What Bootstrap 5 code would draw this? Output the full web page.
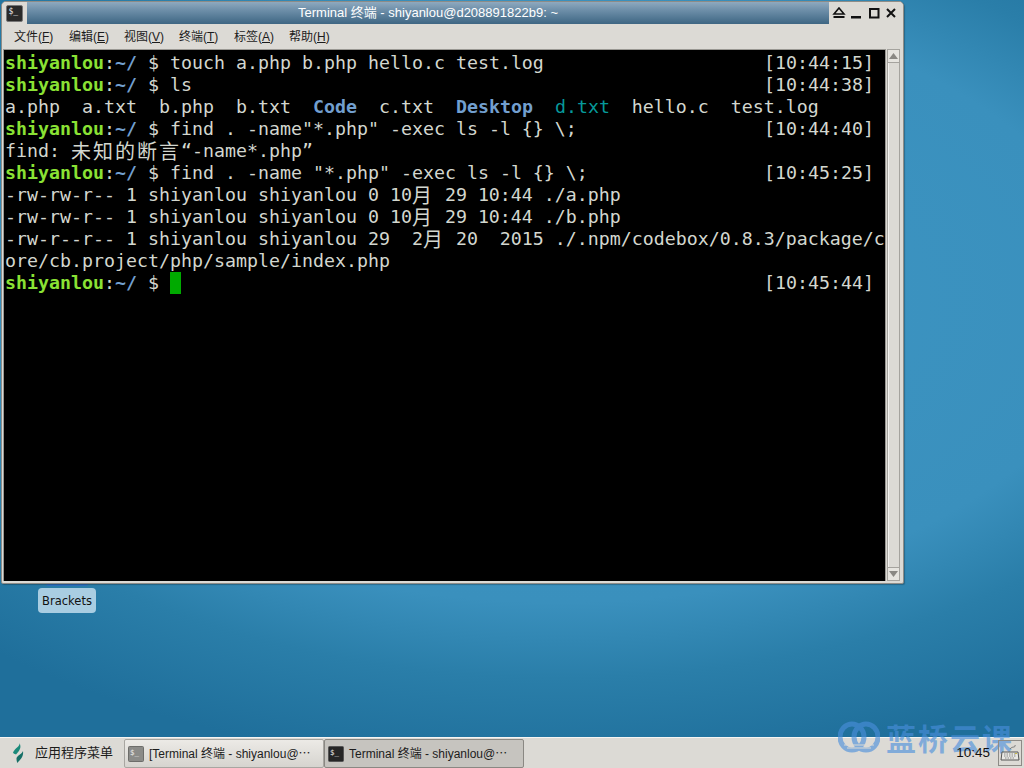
<!DOCTYPE html>
<html lang="zh"><head><meta charset="utf-8"><title>Terminal</title>
<link href="https://cdn.jsdelivr.net/npm/bootstrap@5.3.0/dist/css/bootstrap.min.css" rel="stylesheet">
<style>
html,body{height:100%;overflow:hidden}
body{font-family:"Liberation Sans","Noto Sans CJK SC",sans-serif;font-size:12px;color:#1c1c1c}
.screen{width:1024px;height:768px}
.desk{background:radial-gradient(ellipse 760px 420px at 560px 300px,#3d96c4 0%,#3a90bd 72%,#2a7ea9 90%,#1f6f9b 112%);}
.term-win{position:absolute;left:1px;top:1px;width:903px;height:583px;background:#dcdad5;border:1px solid #8e8c87;border-radius:5px 5px 2px 2px;box-shadow:1px 1px 1px rgba(0,0,0,.25);overflow:hidden}
.win-head{height:22px;background:#dcdad5;flex:none}
.win-ico{width:25px}
.win-title{background:linear-gradient(#8ea9bf,#6f90aa 35%,#3e6683);color:#fff;font-size:13px}
.win-btns{width:74px;padding-right:5px;gap:3.500px}
.win-menu{height:25px;padding-left:12px;font-size:12px;padding-top:1px;flex:none}
.mnu{width:55px}
.win-menu u{text-underline-offset:1px}
.term-row{padding:0 3px 2px 1px;flex:1 1 0;min-height:0}
.term-pane{width:883px;background:#000;border:1px solid #9a9893;border-width:1px 1px 0 1px;padding:2px 0 0 1px}
.term-lines{font-family:"DejaVu Sans Mono","Liberation Mono",monospace;font-size:18.27px;color:#d3d7cf}
.tline{height:22px;line-height:22px;padding-right:11px;white-space:pre}
.pg{color:#8ae234;font-weight:700}
.pb{color:#729fcf;font-weight:700}
.dirb{color:#729fcf;font-weight:700}
.tl{color:#06989a}
.cj{font-family:"Noto Sans CJK SC",sans-serif;font-size:20px;letter-spacing:2px;display:inline-block;vertical-align:top;height:22px;line-height:22px}
.cur{display:inline-block;width:11px;height:22px;background:#00aa00;vertical-align:top}
.sbar{width:13px;background:#cfcdc8;border:1px solid #a5a39e;margin-left:1px}
.sb-btn{height:13px;background:#e6e4df;border-bottom:1px solid #a5a39e}
.sb-btn.low{border-bottom:0;border-top:1px solid #a5a39e}
.sb-thumb{background:#dcdad5;border-left:1px solid #f4f3f0}
.brk{position:absolute;left:38px;top:588px;width:58px;height:25px;background:#a9cde2;border-radius:4px;color:#111;line-height:26px;text-align:center;font-family:"DejaVu Sans",sans-serif;font-size:11.5px}
.brk-under{position:absolute;left:46px;top:584px;width:42px;height:2px;background:#2b6fbe;border-radius:0 0 4px 4px}
.bar{height:31px;background:#dcdad5;border-top:1px solid #f5f5f3;position:relative}
.start{width:124px;padding-left:12px;gap:11px;font-size:13px}
.tbtn{width:200px;height:29px;margin-top:1px;border:1px solid #a8a6a1;border-radius:2px;padding:0 3px;gap:5px;font-size:12px;white-space:nowrap;background:linear-gradient(#eceae6,#d6d4cf)}
.tbtn.on{background:#c6c4bf;border-color:#8a8883}
.clk{font-size:13.500px;width:44px;position:relative;z-index:2;color:#111}
.kb{width:24px;height:26px;border:1px solid #8d8b86;margin:0 2px 0 8px;position:relative;z-index:2}
.wm{position:absolute;left:838px;top:720px;gap:6px;color:#4a8fdc;opacity:.62;pointer-events:none;z-index:1}
.wm-t{font-family:"Noto Sans CJK SC",sans-serif;font-weight:700;font-size:30px;line-height:34px;letter-spacing:2px;width:132px;white-space:nowrap}
</style></head>
<body>
<div class="screen d-flex flex-column position-relative overflow-hidden">
  <div class="desk flex-grow-1 position-relative">
    <div class="brk-under"></div>
    <div class="brk">Brackets</div>
    <div class="term-win d-flex flex-column">
      <div class="win-head d-flex">
        <div class="win-ico d-flex align-items-center justify-content-center">
          <svg width="17" height="17" viewBox="0 0 17 17"><rect x=".5" y=".5" width="16" height="16" rx="1.5" fill="#2a2a2a" stroke="#777"/><text x="2.500" y="9" font-size="8" fill="#eee" font-family="DejaVu Sans Mono">$_</text></svg>
        </div>
        <div class="win-title flex-grow-1 d-flex align-items-center justify-content-center">Terminal 终端 - shiyanlou@d208891822b9: ~</div>
        <div class="win-btns d-flex align-items-center justify-content-end">
          <svg width="14" height="14" viewBox="0 0 14 14"><path d="M7 2l5 6H2z" fill="none" stroke="#111" stroke-width="1.6"/><rect x="1.500" y="10" width="11" height="2" fill="#111"/></svg>
          <svg width="14" height="14" viewBox="0 0 14 14"><rect x="2" y="10" width="10" height="2.500" fill="#111"/></svg>
          <svg width="14" height="14" viewBox="0 0 14 14"><rect x="3" y="3" width="8.500" height="8.500" fill="none" stroke="#111" stroke-width="2"/></svg>
          <svg width="14" height="14" viewBox="0 0 14 14"><path d="M3 3l8 8M11 3l-8 8" stroke="#111" stroke-width="2"/></svg>
        </div>
      </div>
      <div class="win-menu d-flex align-items-center">
        <span class="mnu">文件(<u>F</u>)</span><span class="mnu">编辑(<u>E</u>)</span><span class="mnu">视图(<u>V</u>)</span><span class="mnu">终端(<u>T</u>)</span><span class="mnu">标签(<u>A</u>)</span><span class="mnu">帮助(<u>H</u>)</span>
      </div>
      <div class="term-row d-flex">
        <div class="term-pane term-lines">
          <div class="tline d-flex justify-content-between"><span><span class="pg">shiyanlou</span>:<span class="pb">~/</span> $ touch a.php b.php hello.c test.log</span><span>[10:44:15]</span></div>
          <div class="tline d-flex justify-content-between"><span><span class="pg">shiyanlou</span>:<span class="pb">~/</span> $ ls</span><span>[10:44:38]</span></div>
          <div class="tline"><span>a.php  a.txt  b.php  b.txt  <span class="dirb">Code</span>  c.txt  <span class="dirb">Desktop</span>  <span class="tl">d.txt</span>  hello.c  test.log</span></div>
          <div class="tline d-flex justify-content-between"><span><span class="pg">shiyanlou</span>:<span class="pb">~/</span> $ find . -name"*.php" -exec ls -l {} \;</span><span>[10:44:40]</span></div>
          <div class="tline"><span>find: <span class="cj">未知的断言</span>“-name*.php”</span></div>
          <div class="tline d-flex justify-content-between"><span><span class="pg">shiyanlou</span>:<span class="pb">~/</span> $ find . -name "*.php" -exec ls -l {} \;</span><span>[10:45:25]</span></div>
          <div class="tline"><span>-rw-rw-r-- 1 shiyanlou shiyanlou 0 10<span class="cj">月</span> 29 10:44 ./a.php</span></div>
          <div class="tline"><span>-rw-rw-r-- 1 shiyanlou shiyanlou 0 10<span class="cj">月</span> 29 10:44 ./b.php</span></div>
          <div class="tline"><span>-rw-r--r-- 1 shiyanlou shiyanlou 29  2<span class="cj">月</span> 20  2015 ./.npm/codebox/0.8.3/package/c</span></div>
          <div class="tline"><span>ore/cb.project/php/sample/index.php</span></div>
          <div class="tline d-flex justify-content-between"><span><span class="pg">shiyanlou</span>:<span class="pb">~/</span> $ <span class="cur"></span></span><span>[10:45:44]</span></div>
        </div>
        <div class="sbar d-flex flex-column">
          <div class="sb-btn d-flex align-items-center justify-content-center"><svg width="9" height="6" viewBox="0 0 9 6"><path d="M4.500 0l4.500 6H0z" fill="#8a8883"/></svg></div>
          <div class="sb-thumb flex-grow-1"></div>
          <div class="sb-btn low d-flex align-items-center justify-content-center"><svg width="9" height="6" viewBox="0 0 9 6"><path d="M0 0h9L4.500 6z" fill="#8a8883"/></svg></div>
        </div>
      </div>
    </div>
  </div>
  <div class="bar d-flex">
    <div class="start d-flex align-items-center">
      <svg width="12" height="20" viewBox="0 0 12 20"><path d="M7.500 0C8.500 3 3 5 1 9.500c.5 1 1.500 1.500 3 2C7 8 10 5 7.500 0z" fill="#1a8a7a"/><path d="M11 8C10 11 6 12 4.500 15c0 2 0 3 1 5 2-3 6.500-6 5.500-12z" fill="#156f66"/></svg>
      <span>应用程序菜单</span>
    </div>
    <div class="tbtn d-flex align-items-center">
      <svg width="16" height="16" viewBox="0 0 16 16"><rect x=".5" y=".5" width="15" height="15" rx="1" fill="#8b8b88" stroke="#6d6d6a"/><text x="2" y="8.500" font-size="7.500" fill="#eee" font-family="DejaVu Sans Mono">$_</text></svg>
      <span>[Terminal 终端 - shiyanlou@⋯</span>
    </div>
    <div class="tbtn on d-flex align-items-center">
      <svg width="16" height="16" viewBox="0 0 16 16"><rect x=".5" y=".5" width="15" height="15" rx="1" fill="#262626" stroke="#555"/><text x="2" y="8.500" font-size="7.500" fill="#eee" font-family="DejaVu Sans Mono">$_</text></svg>
      <span>Terminal 终端 - shiyanlou@⋯</span>
    </div>
    <div class="flex-grow-1"></div>
    <div class="clk d-flex align-items-center justify-content-end">10:45</div>
    <div class="kb d-flex align-items-center justify-content-center align-self-center">
      <svg width="20" height="20" viewBox="0 0 20 20"><path d="M10 6c2-3 6-1 5-4" fill="none" stroke="#777"/><path d="M2 9h16l1 8H1z" fill="#e9e8e4" stroke="#555"/><path d="M4 11h12M4 13h12M5 15h10" stroke="#888" stroke-dasharray="1.500 1"/><rect x="15" y="10" width="2" height="1" fill="#c9b94a"/></svg>
    </div>
  </div>
  <div class="wm d-flex align-items-center">
    <svg width="42" height="32" viewBox="0 0 42 32"><ellipse cx="14" cy="16" rx="12" ry="13" fill="none" stroke="currentColor" stroke-width="5"/><ellipse cx="28" cy="16" rx="12" ry="13" fill="none" stroke="currentColor" stroke-width="5"/><path d="M6 24h30M9 27h24" stroke="#dcdad5" stroke-width="1"/></svg>
    <div class="wm-t">蓝桥云课</div>
  </div>
</div>
<script src="https://cdn.jsdelivr.net/npm/bootstrap@5.3.0/dist/js/bootstrap.bundle.min.js"></script>
</body></html>
